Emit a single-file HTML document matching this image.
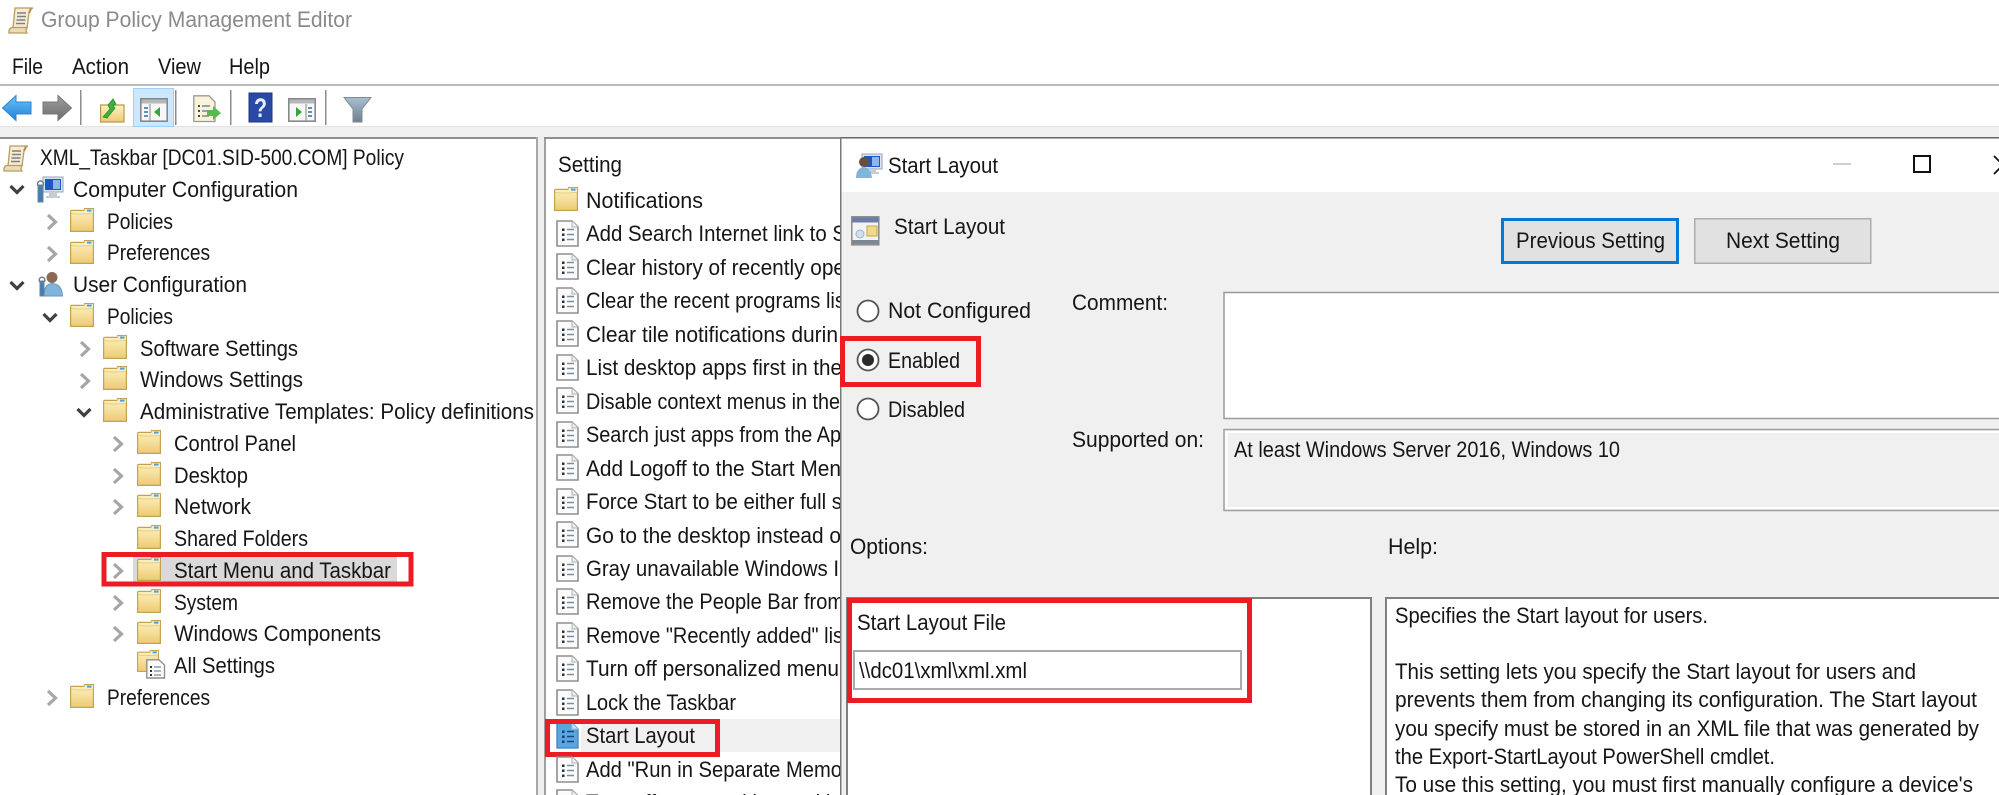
<!DOCTYPE html>
<html>
<head>
<meta charset="utf-8">
<style>
html,body{margin:0;padding:0;background:#fff;width:1999px;height:795px;overflow:hidden}
svg{display:block;filter:blur(.3px)}
text{font-family:"Liberation Sans",sans-serif;font-size:22px;fill:#161616}
.ic{filter:url(#soft)}
</style>
</head>
<body>
<svg width="1999" height="795" viewBox="0 0 1999 795" xmlns="http://www.w3.org/2000/svg">
<defs>
<filter id="soft" x="-5%" y="-5%" width="110%" height="110%"><feGaussianBlur stdDeviation="0.35"/></filter>
<linearGradient id="fg" x1="0" y1="0" x2="0" y2="1"><stop offset="0" stop-color="#fdf3c4"/><stop offset="1" stop-color="#eccb72"/></linearGradient>
<linearGradient id="bl" x1="0" y1="0" x2="0" y2="1"><stop offset="0" stop-color="#6ec1f7"/><stop offset="1" stop-color="#1f82d8"/></linearGradient>
<linearGradient id="gr" x1="0" y1="0" x2="0" y2="1"><stop offset="0" stop-color="#a0a0a0"/><stop offset="1" stop-color="#6a6a6a"/></linearGradient>
<linearGradient id="fn" x1="0" y1="0" x2="0" y2="1"><stop offset="0" stop-color="#a9c0d2"/><stop offset="1" stop-color="#6f7f8c"/></linearGradient>
<symbol id="folder" width="24" height="24" viewBox="0 0 24 24">
<path d="M.6 23.400V3.500Q.6 2.400 2 2.400H14.500V.6H23.400V23.400Z" fill="url(#fg)" stroke="#c4a250" stroke-width="1.200"/>
<path d="M14.500 1.200H23V5H14.500Z" fill="#f7edc6"/>
<rect x="17" y="1.600" width="4.500" height="2" fill="#4aa0e6"/>
<path d="M1.200 5.500Q8 6.500 23 5.500" fill="none" stroke="#e2c57a" stroke-width=".8"/>
</symbol>
<symbol id="doc" width="23" height="27" viewBox="0 0 23 27">
<path d="M1 1H16L22 7V26H1Z" fill="#fbfbfb" stroke="#8f8f8f" stroke-width="1.600"/>
<path d="M16 1V7H22" fill="#eee" stroke="#b0b0b0"/>
<path d="M6 8.500h2.500V11H6zM6 13.500h2.500V16H6zM6 18.500h2.500V21H6z" fill="#333"/>
<path d="M11 9.500h7M11 14.500h7M11 19.500h7" stroke="#7a8ea0" stroke-width="1.500"/>
</symbol>
<symbol id="docsel" width="23" height="27" viewBox="0 0 23 27">
<path d="M1 1H16L22 7V26H1Z" fill="#5aa6e0" stroke="#3a84c4" stroke-width="1.300"/>
<path d="M16 1V7H22" fill="#cfe3f5" stroke="#9cc4e6"/>
<path d="M6 8.500h2.500V11H6zM6 13.500h2.500V16H6zM6 18.500h2.500V21H6z" fill="#12406e"/>
<path d="M11 9.500h7M11 14.500h7M11 19.500h7" stroke="#15487a" stroke-width="1.500"/>
</symbol>
<symbol id="scroll" width="27" height="28" viewBox="0 0 27 28">
<path d="M7 2H25Q22 3 21 7L19 22H5Z" fill="#f5ecd2" stroke="#b89c66" stroke-width="1.300"/>
<path d="M9 7h9M9 10.500h9M8.500 14h9M8 17.500h9" stroke="#7f7f85" stroke-width="1.500"/>
<path d="M1 27Q.5 22 4 21.500H19Q17 24 19 27Z" fill="#eadcb5" stroke="#b89c66" stroke-width="1.300"/>
<path d="M21 7L23 2.500" stroke="#b98a4a" stroke-width="2"/>
</symbol>
<symbol id="right" width="12" height="18" viewBox="0 0 12 18"><path d="M2 2L9.500 9L2 16" fill="none" stroke="#a6a6a6" stroke-width="3.200"/></symbol>
<symbol id="down" width="16" height="12" viewBox="0 0 16 12"><path d="M1.500 2L8 8.500L14.500 2" fill="none" stroke="#404040" stroke-width="3.200"/></symbol>
<symbol id="pane" width="28" height="24" viewBox="0 0 28 24">
<rect x=".8" y=".8" width="26.400" height="22.400" fill="#f7f7f7" stroke="#888" stroke-width="1.600"/>
<rect x="1.500" y="1.500" width="25" height="4" fill="#b4b8bd"/>
<path d="M10 6V23" stroke="#999" stroke-width="1.200"/>
<path d="M4 9h4v2H4zM4 13h4v2H4zM4 17h4v2H4z" fill="#5f8fb8"/>
<path d="M20 9L14 14L20 19Z" fill="#37a637"/>
</symbol>
<symbol id="pane2" width="28" height="24" viewBox="0 0 28 24">
<rect x=".8" y=".8" width="26.400" height="22.400" fill="#f7f7f7" stroke="#888" stroke-width="1.600"/>
<rect x="1.500" y="1.500" width="25" height="4" fill="#b4b8bd"/>
<path d="M18 6V23" stroke="#999" stroke-width="1.200"/>
<path d="M20 9h4v2h-4zM20 13h4v2h-4zM20 17h4v2h-4z" fill="#5f8fb8"/>
<path d="M8 9L14 14L8 19Z" fill="#37a637"/>
</symbol>
</defs>

<rect width="1999" height="795" fill="#fff"/>

<!-- title bar -->
<use class="ic" href="#scroll" x="8" y="6" width="27" height="28"/>
<text x="41" y="27" textLength="311" lengthAdjust="spacingAndGlyphs" style="fill:#8a8a8a">Group Policy Management Editor</text>

<!-- menu -->
<text x="12" y="74" textLength="31" lengthAdjust="spacingAndGlyphs">File</text>
<text x="72" y="74" textLength="57" lengthAdjust="spacingAndGlyphs">Action</text>
<text x="158" y="74" textLength="43" lengthAdjust="spacingAndGlyphs">View</text>
<text x="229" y="74" textLength="41" lengthAdjust="spacingAndGlyphs">Help</text>
<rect x="0" y="84" width="1999" height="2" fill="#b9b9b9"/>

<!-- toolbar -->
<rect x="0" y="126" width="1999" height="12" fill="#f0f0f0"/>
<rect x="0" y="126" width="1999" height="1" fill="#e2e2e2"/>
<path class="ic" d="M2.500 108L16 95.500V102H31V114H16V120.500Z" fill="url(#bl)" stroke="#2a86d6"/>
<path class="ic" d="M71.500 108L58 95.500V102H43V114H58V120.500Z" fill="url(#gr)" stroke="#777"/>
<rect x="80" y="90" width="1.500" height="35" fill="#8c8c8c"/>
<g class="ic" transform="translate(100 97)">
<path d="M.6 25V8H24V25Z" fill="url(#fg)" stroke="#b89a50" stroke-width="1.200"/>
<path d="M3 20L10 12L8 8L13 2L16 7L13 9L15 11L7 21Z" fill="#3fae3f" stroke="#2c8c2c" stroke-width=".8"/>
</g>
<rect x="133.500" y="88.500" width="40" height="38" fill="#cce8ff" stroke="#99d1ff"/>
<use class="ic" href="#pane" x="140" y="98" width="28" height="24"/>
<rect x="175" y="90" width="1.500" height="35" fill="#8c8c8c"/>
<g class="ic" transform="translate(193 95)">
<path d="M.8 .8H16L22 7V26.500H.8Z" fill="#faf3dc" stroke="#999" stroke-width="1.300"/>
<path d="M5 10h2v2H5zM5 15h2v2H5zM5 20h2v2H5z" fill="#444"/>
<path d="M9 11h8M9 16h6M9 21h7" stroke="#7d8791" stroke-width="1.500"/>
<path d="M14 15h6v-4l8 7-8 7v-4h-6z" fill="#59bb50"/>
</g>
<rect x="230" y="90" width="1.500" height="35" fill="#8c8c8c"/>
<rect class="ic" x="249" y="93" width="23" height="29" fill="#2c4aa5" stroke="#1f367c"/>
<text x="254" y="117" textLength="13" lengthAdjust="spacingAndGlyphs" style="fill:#e8eefc;font-size:27px;font-weight:bold">?</text>
<use class="ic" href="#pane2" x="288" y="98" width="28" height="24"/>
<rect x="325" y="90" width="1.500" height="35" fill="#8c8c8c"/>
<path class="ic" d="M344 97.500H371L362 109V122H353V109Z" fill="url(#fn)" stroke="#7e8b96"/>

<!-- left tree panel -->
<rect x="0" y="137" width="538" height="658" fill="#fff"/>
<rect x="0" y="137" width="538" height="2" fill="#8f8f8f"/>
<rect x="536" y="137" width="2" height="658" fill="#a8a8a8"/>
<rect x="538" y="137" width="6" height="658" fill="#f0f0f0"/>
<rect x="544" y="138" width="2" height="657" fill="#a0a0a0"/>
<rect x="544" y="137" width="300" height="2" fill="#8f8f8f"/>

<use class="ic" href="#scroll" x="3" y="144" width="27" height="28"/>
<text x="40" y="165" textLength="364" lengthAdjust="spacingAndGlyphs">XML_Taskbar [DC01.SID-500.COM] Policy</text>

<use href="#down" x="9" y="184" width="16" height="12"/>
<g class="ic" transform="translate(36 176)">
<rect x="7" y="1" width="20" height="15" fill="#dbe4ee" stroke="#97a6b3"/>
<rect x="9" y="3" width="16" height="11" fill="#1e56c8"/>
<rect x="17" y="4" width="7" height="9" fill="#8fb6e8"/>
<path d="M13 16h8v4h3v2H10v-2h3z" fill="#c7ccd1"/>
<path d="M2 9h5v17H2z" fill="#3d7fb8" stroke="#6d8392"/>
<circle cx="4.500" cy="8" r="3" fill="none" stroke="#6b7f90" stroke-width="1.500"/>
</g>
<text x="73" y="197" textLength="225" lengthAdjust="spacingAndGlyphs">Computer Configuration</text>

<use href="#right" x="46" y="213" width="12" height="18"/>
<use class="ic" href="#folder" x="70" y="208" width="24" height="24"/>
<text x="107" y="229" textLength="66" lengthAdjust="spacingAndGlyphs">Policies</text>

<use href="#right" x="46" y="245" width="12" height="18"/>
<use class="ic" href="#folder" x="70" y="240" width="24" height="24"/>
<text x="107" y="260" textLength="103" lengthAdjust="spacingAndGlyphs">Preferences</text>

<use href="#down" x="9" y="280" width="16" height="12"/>
<g class="ic" transform="translate(38 271)">
<circle cx="14" cy="6.500" r="5.500" fill="#8a6a52"/>
<path d="M6 25Q6 13 14 12.500Q24 13 24.500 25Z" fill="#7fb4dd" stroke="#6b96ba"/>
<path d="M2 10h4v15H2z" fill="#3d7fb8" stroke="#6d8392"/>
<circle cx="4" cy="9" r="2.800" fill="none" stroke="#6b7f90" stroke-width="1.500"/>
</g>
<text x="73" y="292" textLength="174" lengthAdjust="spacingAndGlyphs">User Configuration</text>

<use href="#down" x="42" y="312" width="16" height="12"/>
<use class="ic" href="#folder" x="70" y="303" width="24" height="24"/>
<text x="107" y="324" textLength="66" lengthAdjust="spacingAndGlyphs">Policies</text>

<use href="#right" x="79" y="340" width="12" height="18"/>
<use class="ic" href="#folder" x="103" y="335" width="24" height="24"/>
<text x="140" y="356" textLength="158" lengthAdjust="spacingAndGlyphs">Software Settings</text>

<use href="#right" x="79" y="372" width="12" height="18"/>
<use class="ic" href="#folder" x="103" y="366" width="24" height="24"/>
<text x="140" y="387" textLength="163" lengthAdjust="spacingAndGlyphs">Windows Settings</text>

<use href="#down" x="76" y="407" width="16" height="12"/>
<use class="ic" href="#folder" x="103" y="398" width="24" height="24"/>
<text x="140" y="419" textLength="394" lengthAdjust="spacingAndGlyphs">Administrative Templates: Policy definitions</text>

<use href="#right" x="112" y="435" width="12" height="18"/>
<use class="ic" href="#folder" x="137" y="430" width="24" height="24"/>
<text x="174" y="451" textLength="122" lengthAdjust="spacingAndGlyphs">Control Panel</text>

<use href="#right" x="112" y="467" width="12" height="18"/>
<use class="ic" href="#folder" x="137" y="462" width="24" height="24"/>
<text x="174" y="483" textLength="74" lengthAdjust="spacingAndGlyphs">Desktop</text>

<use href="#right" x="112" y="498" width="12" height="18"/>
<use class="ic" href="#folder" x="137" y="493" width="24" height="24"/>
<text x="174" y="514" textLength="77" lengthAdjust="spacingAndGlyphs">Network</text>

<use class="ic" href="#folder" x="137" y="525" width="24" height="24"/>
<text x="174" y="546" textLength="134" lengthAdjust="spacingAndGlyphs">Shared Folders</text>

<rect x="133" y="557" width="264" height="26" fill="#d9d9d9"/>
<use href="#right" x="112" y="562" width="12" height="18"/>
<use class="ic" href="#folder" x="137" y="557" width="24" height="24"/>
<text x="174" y="578" textLength="217" lengthAdjust="spacingAndGlyphs">Start Menu and Taskbar</text>
<rect x="104" y="554.500" width="307" height="29.500" fill="none" stroke="#ed1c24" stroke-width="5"/>

<use href="#right" x="112" y="594" width="12" height="18"/>
<use class="ic" href="#folder" x="137" y="589" width="24" height="24"/>
<text x="174" y="610" textLength="64" lengthAdjust="spacingAndGlyphs">System</text>

<use href="#right" x="112" y="625" width="12" height="18"/>
<use class="ic" href="#folder" x="137" y="620" width="24" height="24"/>
<text x="174" y="641" textLength="207" lengthAdjust="spacingAndGlyphs">Windows Components</text>

<use class="ic" href="#folder" x="137" y="650" width="22" height="22"/>
<g class="ic" transform="translate(146 659)">
<path d="M.8 .8H13L18.500 6V19H.8Z" fill="#fbfbfb" stroke="#8f8f8f" stroke-width="1.400"/>
<path d="M4 7h2v2H4zM4 11h2v2H4zM4 15h2v2H4z" fill="#333"/>
<path d="M8 8h7M8 12h7M8 16h7" stroke="#7a8ea0" stroke-width="1.300"/>
</g>
<text x="174" y="673" textLength="101" lengthAdjust="spacingAndGlyphs">All Settings</text>

<use href="#right" x="46" y="689" width="12" height="18"/>
<use class="ic" href="#folder" x="70" y="684" width="24" height="24"/>
<text x="107" y="705" textLength="103" lengthAdjust="spacingAndGlyphs">Preferences</text>

<!-- settings list -->
<text x="558" y="172" textLength="64" lengthAdjust="spacingAndGlyphs">Setting</text>
<use class="ic" href="#folder" x="554" y="187" width="24" height="24"/>
<text x="586" y="208" textLength="117" lengthAdjust="spacingAndGlyphs">Notifications</text>

<use class="ic" href="#doc" x="556" y="220" width="23" height="27"/><text x="586" y="241" textLength="260" lengthAdjust="spacingAndGlyphs">Add Search Internet link to S</text>
<use class="ic" href="#doc" x="556" y="253" width="23" height="27"/><text x="586" y="275" textLength="259" lengthAdjust="spacingAndGlyphs">Clear history of recently ope</text>
<use class="ic" href="#doc" x="556" y="287" width="23" height="27"/><text x="586" y="308" textLength="259" lengthAdjust="spacingAndGlyphs">Clear the recent programs lis</text>
<use class="ic" href="#doc" x="556" y="320" width="23" height="27"/><text x="586" y="342" textLength="252" lengthAdjust="spacingAndGlyphs">Clear tile notifications durin</text>
<use class="ic" href="#doc" x="556" y="354" width="23" height="27"/><text x="586" y="375" textLength="256" lengthAdjust="spacingAndGlyphs">List desktop apps first in the</text>
<use class="ic" href="#doc" x="556" y="387" width="23" height="27"/><text x="586" y="409" textLength="254" lengthAdjust="spacingAndGlyphs">Disable context menus in the</text>
<use class="ic" href="#doc" x="556" y="421" width="23" height="27"/><text x="586" y="442" textLength="255" lengthAdjust="spacingAndGlyphs">Search just apps from the Ap</text>
<use class="ic" href="#doc" x="556" y="454" width="23" height="27"/><text x="586" y="476" textLength="255" lengthAdjust="spacingAndGlyphs">Add Logoff to the Start Men</text>
<use class="ic" href="#doc" x="556" y="488" width="23" height="27"/><text x="586" y="509" textLength="256" lengthAdjust="spacingAndGlyphs">Force Start to be either full s</text>
<use class="ic" href="#doc" x="556" y="521" width="23" height="27"/><text x="586" y="543" textLength="255" lengthAdjust="spacingAndGlyphs">Go to the desktop instead o</text>
<use class="ic" href="#doc" x="556" y="555" width="23" height="27"/><text x="586" y="576" textLength="253" lengthAdjust="spacingAndGlyphs">Gray unavailable Windows I</text>
<use class="ic" href="#doc" x="556" y="588" width="23" height="27"/><text x="586" y="609" textLength="258" lengthAdjust="spacingAndGlyphs">Remove the People Bar from</text>
<use class="ic" href="#doc" x="556" y="622" width="23" height="27"/><text x="586" y="643" textLength="257" lengthAdjust="spacingAndGlyphs">Remove "Recently added" lis</text>
<use class="ic" href="#doc" x="556" y="655" width="23" height="27"/><text x="586" y="676" textLength="253" lengthAdjust="spacingAndGlyphs">Turn off personalized menu</text>
<use class="ic" href="#doc" x="556" y="689" width="23" height="27"/><text x="586" y="710" textLength="150" lengthAdjust="spacingAndGlyphs">Lock the Taskbar</text>

<rect x="581" y="719" width="262" height="33" fill="#f0f0f0"/>
<use class="ic" href="#docsel" x="556" y="722" width="23" height="27"/>
<text x="586" y="743" textLength="109" lengthAdjust="spacingAndGlyphs">Start Layout</text>
<rect x="547.500" y="721.500" width="170" height="33" fill="none" stroke="#ed1c24" stroke-width="5"/>

<use class="ic" href="#doc" x="556" y="756" width="23" height="27"/><text x="586" y="777" textLength="256" lengthAdjust="spacingAndGlyphs">Add "Run in Separate Memo</text>
<use class="ic" href="#doc" x="556" y="789" width="23" height="27"/><text x="586" y="810" textLength="256" lengthAdjust="spacingAndGlyphs">Turn off user tracking and lo</text>

<!-- dialog -->
<rect x="840" y="138" width="1159" height="657" fill="#f0f0f0"/>
<rect x="841" y="139" width="1158" height="53" fill="#fff"/>
<rect x="840" y="137" width="1159" height="1.500" fill="#6a6a6a"/>
<rect x="840" y="137" width="1.500" height="658" fill="#7a7a7a"/>

<g class="ic" transform="translate(855 153)">
<rect x="7" y="1" width="20" height="15" fill="#dbe4ee" stroke="#97a6b3"/>
<rect x="9" y="3" width="16" height="11" fill="#1e56c8"/>
<rect x="17" y="4" width="7" height="9" fill="#8fb6e8"/>
<path d="M15 16h6v3h3v2H13v-2h2z" fill="#c7ccd1"/>
<circle cx="9" cy="9" r="5" fill="#6a5040"/>
<path d="M1 25Q1 15 9 14Q16 15 17 25Z" fill="#80b5dc"/>
</g>
<text x="888" y="173" textLength="110" lengthAdjust="spacingAndGlyphs">Start Layout</text>
<rect x="1833" y="163" width="18" height="2" fill="#cfcfcf"/>
<rect x="1914" y="156" width="16" height="16" fill="none" stroke="#111" stroke-width="2"/>
<path d="M1994 156L2012 174M2012 156L1994 174" stroke="#111" stroke-width="1.800"/>

<g class="ic" transform="translate(851 216)">
<rect x=".8" y=".8" width="27" height="28" fill="#f3f3f3" stroke="#8a8a8a" stroke-width="1.500"/>
<rect x="1.500" y="1.500" width="26" height="5" fill="#6a7fa8"/>
<rect x="16" y="10" width="10" height="10" fill="#f3d98a" stroke="#c7a650"/>
<rect x="1.500" y="24" width="26" height="4" fill="#7b8794"/>
<circle cx="9" cy="18" r="4" fill="#cfe0ef" stroke="#a4b4c4"/>
</g>
<text x="894" y="234" textLength="111" lengthAdjust="spacingAndGlyphs">Start Layout</text>

<!-- radios -->
<circle cx="868" cy="311" r="10.500" fill="#fff" stroke="#555" stroke-width="1.800"/>
<text x="888" y="318" textLength="143" lengthAdjust="spacingAndGlyphs">Not Configured</text>
<circle cx="868" cy="360" r="10.500" fill="#fff" stroke="#555" stroke-width="1.800"/>
<circle cx="868" cy="360" r="6" fill="#2a2a2a"/>
<text x="888" y="368" textLength="72" lengthAdjust="spacingAndGlyphs">Enabled</text>
<circle cx="868" cy="409" r="10.500" fill="#fff" stroke="#555" stroke-width="1.800"/>
<text x="888" y="417" textLength="77" lengthAdjust="spacingAndGlyphs">Disabled</text>
<rect x="842.500" y="338.500" width="136" height="46" fill="none" stroke="#ed1c24" stroke-width="5"/>

<!-- buttons -->
<rect x="1502.500" y="219.500" width="175" height="43" fill="#e1e1e1" stroke="#0078d7" stroke-width="3"/>
<text x="1516" y="248" textLength="149" lengthAdjust="spacingAndGlyphs">Previous Setting</text>
<rect x="1694.750" y="218.750" width="176" height="44.500" fill="#e1e1e1" stroke="#adadad" stroke-width="1.500"/>
<text x="1726" y="248" textLength="114" lengthAdjust="spacingAndGlyphs">Next Setting</text>

<!-- comment / supported -->
<text x="1072" y="310" textLength="96" lengthAdjust="spacingAndGlyphs">Comment:</text>
<rect x="1224" y="292.500" width="780" height="126" fill="#fff" stroke="#9a9a9a" stroke-width="1.500"/>
<text x="1072" y="447" textLength="132" lengthAdjust="spacingAndGlyphs">Supported on:</text>
<rect x="1224" y="429.500" width="780" height="81" fill="#f0f0f0" stroke="#a0a0a0" stroke-width="1.500"/>
<rect x="1226.500" y="432" width="780" height="76" fill="none" stroke="#fff" stroke-width="2"/>
<text x="1234" y="457" textLength="386" lengthAdjust="spacingAndGlyphs">At least Windows Server 2016, Windows 10</text>

<!-- options/help -->
<text x="850" y="554" textLength="78" lengthAdjust="spacingAndGlyphs">Options:</text>
<text x="1388" y="554" textLength="50" lengthAdjust="spacingAndGlyphs">Help:</text>

<rect x="847" y="598" width="524" height="200" fill="#fff" stroke="#808080" stroke-width="2"/>
<text x="857" y="630" textLength="149" lengthAdjust="spacingAndGlyphs">Start Layout File</text>
<rect x="854" y="651" width="387" height="38" fill="#fff" stroke="#aaaaaa" stroke-width="2"/>
<text x="859" y="678" textLength="168" lengthAdjust="spacingAndGlyphs">\\dc01\xml\xml.xml</text>
<rect x="849.500" y="600.500" width="400" height="100" fill="none" stroke="#ed1c24" stroke-width="5"/>

<rect x="1386" y="598" width="620" height="200" fill="#fff" stroke="#808080" stroke-width="2"/>
<text x="1395" y="623" textLength="313" lengthAdjust="spacingAndGlyphs">Specifies the Start layout for users.</text>
<text x="1395" y="679" textLength="521" lengthAdjust="spacingAndGlyphs">This setting lets you specify the Start layout for users and</text>
<text x="1395" y="707" textLength="582" lengthAdjust="spacingAndGlyphs">prevents them from changing its configuration. The Start layout</text>
<text x="1395" y="736" textLength="584" lengthAdjust="spacingAndGlyphs">you specify must be stored in an XML file that was generated by</text>
<text x="1395" y="764" textLength="380" lengthAdjust="spacingAndGlyphs">the Export-StartLayout PowerShell cmdlet.</text>
<text x="1395" y="792" textLength="578" lengthAdjust="spacingAndGlyphs">To use this setting, you must first manually configure a device's</text>
</svg>
</body>
</html>
